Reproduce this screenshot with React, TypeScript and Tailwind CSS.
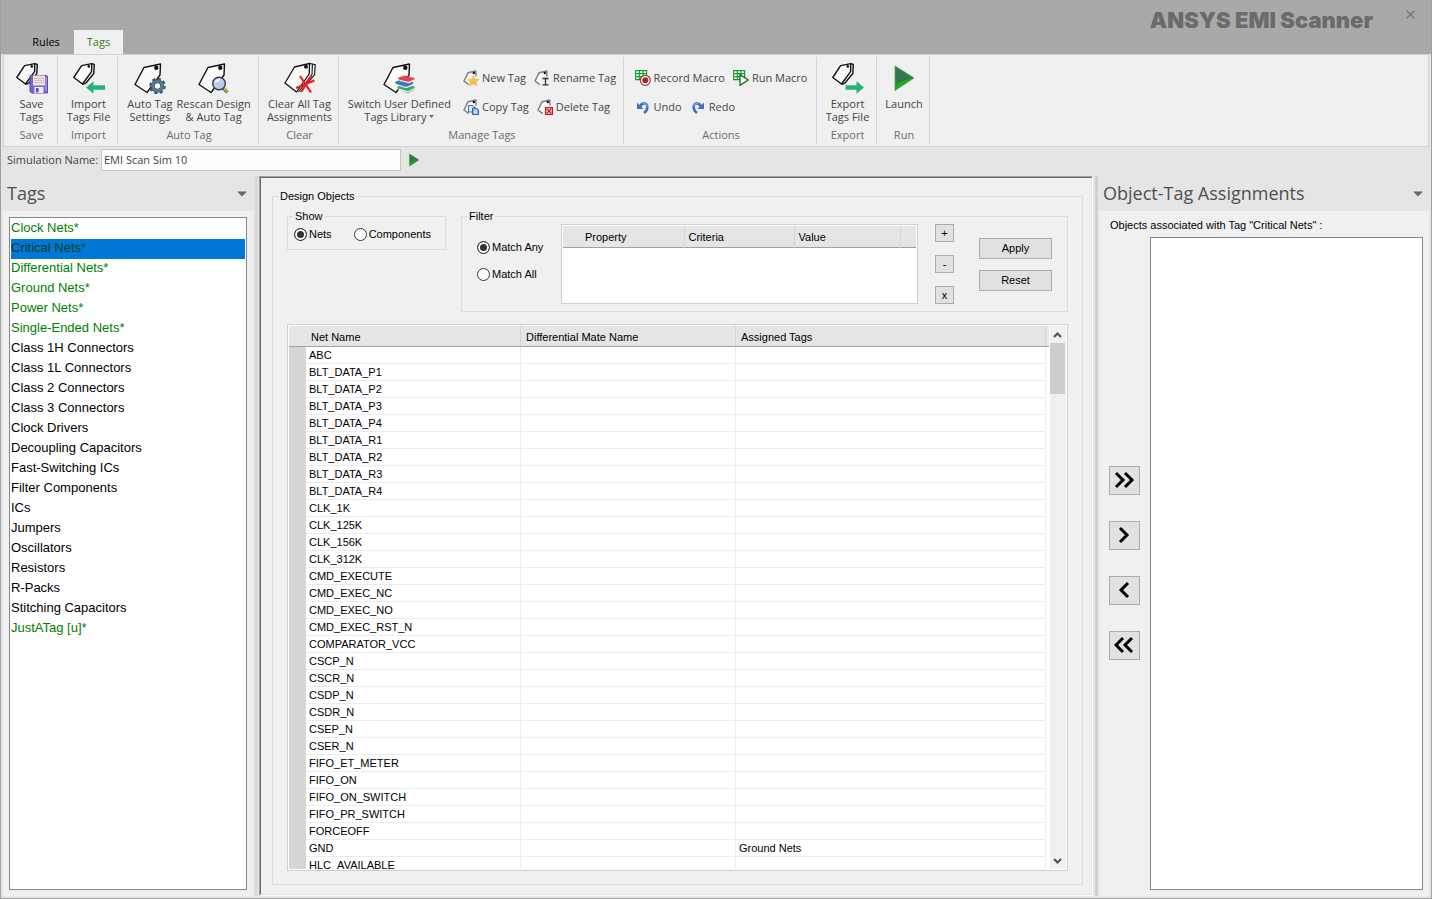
import React, { useState } from "react";

const INK = "#111111";

const TAGS: { name: string; edited?: boolean }[] = [
  { name: "Clock Nets*", edited: true },
  { name: "Critical Nets*", edited: true },
  { name: "Differential Nets*", edited: true },
  { name: "Ground Nets*", edited: true },
  { name: "Power Nets*", edited: true },
  { name: "Single-Ended Nets*", edited: true },
  { name: "Class 1H Connectors" },
  { name: "Class 1L Connectors" },
  { name: "Class 2 Connectors" },
  { name: "Class 3 Connectors" },
  { name: "Clock Drivers" },
  { name: "Decoupling Capacitors" },
  { name: "Fast-Switching ICs" },
  { name: "Filter Components" },
  { name: "ICs" },
  { name: "Jumpers" },
  { name: "Oscillators" },
  { name: "Resistors" },
  { name: "R-Packs" },
  { name: "Stitching Capacitors" },
  { name: "JustATag [u]*", edited: true },
];

const NETS: { name: string; tags?: string }[] = [
  { name: "ABC" },
  { name: "BLT_DATA_P1" },
  { name: "BLT_DATA_P2" },
  { name: "BLT_DATA_P3" },
  { name: "BLT_DATA_P4" },
  { name: "BLT_DATA_R1" },
  { name: "BLT_DATA_R2" },
  { name: "BLT_DATA_R3" },
  { name: "BLT_DATA_R4" },
  { name: "CLK_1K" },
  { name: "CLK_125K" },
  { name: "CLK_156K" },
  { name: "CLK_312K" },
  { name: "CMD_EXECUTE" },
  { name: "CMD_EXEC_NC" },
  { name: "CMD_EXEC_NO" },
  { name: "CMD_EXEC_RST_N" },
  { name: "COMPARATOR_VCC" },
  { name: "CSCP_N" },
  { name: "CSCR_N" },
  { name: "CSDP_N" },
  { name: "CSDR_N" },
  { name: "CSEP_N" },
  { name: "CSER_N" },
  { name: "FIFO_ET_METER" },
  { name: "FIFO_ON" },
  { name: "FIFO_ON_SWITCH" },
  { name: "FIFO_PR_SWITCH" },
  { name: "FORCEOFF" },
  { name: "GND", tags: "Ground Nets" },
  { name: "HLC_AVAILABLE" },
];

/* ---------- icons ---------- */

function Icon32({ children }: { children: React.ReactNode }) {
  return (
    <svg width="32" height="32" viewBox="0 0 32 32" fill="none" aria-hidden="true" className="shrink-0">
      {children}
    </svg>
  );
}

function BigTag() {
  return (
    <>
      <path d="M1 22.5 L10 5.5 L26.5 2 L26 13 L13 30.5 Z" fill="#fafafa" stroke={INK} strokeWidth="1.4" strokeLinejoin="round" />
      <circle cx="22.3" cy="5.8" r="2.2" fill={INK} />
    </>
  );
}

function SmallDoubleTag() {
  return (
    <>
      <path d="M12.5 21.5 L20.8 11.5 L21.3 2.4 L18.5 1.6" fill="#fafafa" stroke={INK} strokeWidth="1.4" strokeLinejoin="round" />
      <path d="M.8 15.5 L8.6 3.6 L18.8 1.6 L18.6 9.6 L9.5 22 Z" fill="#fafafa" stroke={INK} strokeWidth="1.4" strokeLinejoin="round" />
      <path d="M9.5 22 L12.5 21.5" stroke={INK} strokeWidth="1.4" />
      <circle cx="15.8" cy="4.4" r="1.3" fill={INK} />
    </>
  );
}

function SaveTagsIcon() {
  return (
    <Icon32>
      <SmallDoubleTag />
      <path d="M14 13.5 H30 Q31.5 13.5 31.5 15 V31 H15.5 L14 29.5 Z" fill="#7266cf" stroke="#5a4fb5" />
      <rect x="17" y="13.5" width="12" height="10" fill="#f0dfd8" />
      <path d="M18 16.5 H28 M18 18.5 H28 M18 20.5 H28" stroke="#cdb9b4" strokeWidth=".8" />
      <rect x="18.5" y="25" width="9" height="6" fill="#efeff8" />
      <rect x="20" y="26" width="2.6" height="4.4" fill="#5a4fb5" />
      <path d="M30 15 V29" stroke="#b4acec" />
    </Icon32>
  );
}

function ImportTagsIcon() {
  return (
    <Icon32>
      <SmallDoubleTag />
      <path d="M13 25.5 L20.5 19.2 V23.3 H32 V27.8 H20.5 V31.8 Z" fill="#27b378" />
    </Icon32>
  );
}

function ExportTagsIcon() {
  return (
    <Icon32>
      <SmallDoubleTag />
      <path d="M32 25.5 L24.5 19.2 V23.3 H13.5 V27.8 H24.5 V31.8 Z" fill="#27b378" />
    </Icon32>
  );
}

function AutoTagIcon() {
  return (
    <Icon32>
      <BigTag />
      <circle cx="23.5" cy="24" r="6.6" stroke="#3c5c6e" strokeWidth="3.4" strokeDasharray="2.9 2.28" />
      <circle cx="23.5" cy="24" r="4.7" stroke="#3c5c6e" strokeWidth="4" fill="#fafafa" />
      <circle cx="23.5" cy="24" r="4.7" stroke="#567d92" strokeWidth="2.6" />
    </Icon32>
  );
}

function RescanIcon() {
  return (
    <Icon32>
      <BigTag />
      <path d="M25 26 L29.4 30.4" stroke="#857526" strokeWidth="3.4" />
      <path d="M25.5 25.8 L29 29.4" stroke="#d3c156" strokeWidth="1.4" />
      <circle cx="21" cy="21.5" r="6.3" fill="#b9cdf0" stroke="#333c4d" strokeWidth="1.4" />
      <path d="M16.5 20.5 Q18 16.5 22 16.8 Q22.5 20 16.5 20.5" fill="#f3f7ff" />
    </Icon32>
  );
}

function ClearTagsIcon() {
  return (
    <Icon32>
      <path d="M16.5 30 L30.6 12.5 L31.2 2.6 L26 1.5" fill="#fafafa" stroke={INK} strokeWidth="1.1" />
      <path d="M14.5 30 L28 12.5 L28.4 2.2" fill="#fafafa" stroke={INK} strokeWidth="1.1" />
      <path d="M1 21 L10.5 5 L25.6 1.5 L25.2 12 L12.5 30 Z" fill="#fafafa" stroke={INK} strokeWidth="1.3" strokeLinejoin="round" />
      <circle cx="22" cy="4.8" r="2" fill={INK} />
      <path d="M16 14 L27 30.5 M12 26 L30.5 18.5 M27.5 13.5 L17.5 29.5" stroke="#ec1c24" strokeWidth="2.2" />
    </Icon32>
  );
}

function LibraryIcon() {
  return (
    <Icon32>
      <BigTag />
      <path d="M15 27 L25 31.5 L31.5 27.5 V24.5 L20 22.5 L14 25 Z" fill="#45a466" />
      <path d="M15.5 27.2 L25 30 L31.5 26.5" stroke="#eaf5ee" strokeWidth="1.4" />
      <path d="M12.5 21.5 L23.5 26.5 L30 22.5 V20 L17 18 L12 20 Z" fill="#2f7cc2" />
      <path d="M14.5 23 L23.5 25.6 L30 22.6" stroke="#e4f0fb" strokeWidth="1.3" />
      <path d="M15 17 L26 21.5 L31.5 18 V16 L21.5 13.5 L15.5 15.5 Z" fill="#e0464b" />
      <path d="M16.5 18.3 L26 20.6 L31.5 17.9" stroke="#fbe7e6" strokeWidth="1.2" />
    </Icon32>
  );
}

function LaunchIcon({ size }: { size: number }) {
  return (
    <svg width={size} height={size} viewBox="0 0 32 32" fill="none" aria-hidden="true" className="shrink-0">
      <path d="M7 4 L26 16 L7 28.5 Z" fill="#2f8f2f" />
      <path d="M7 4 L26 16 Q16 17 7 22 Z" fill="#34774b" />
      <path d="M7.5 27.5 Q9 19.5 25 16.2 Z" fill="#12b312" />
      <path d="M7 4 L26 16 L7 28.5 Z" stroke="#5ba05b" strokeWidth=".8" />
    </svg>
  );
}

function Icon16({ children }: { children: React.ReactNode }) {
  return (
    <svg width="16" height="16" viewBox="0 0 16 16" fill="none" aria-hidden="true" className="shrink-0">
      {children}
    </svg>
  );
}

function MiniTag() {
  return (
    <>
      <path d="M5.8 14.6 L1 11 L5 2.8 L12.8 1 L12.9 6.5" fill="#fafafa" stroke="#808080" strokeWidth="1.5" strokeLinejoin="round" />
      <circle cx="10.8" cy="3" r="1.2" fill={INK} />
    </>
  );
}

const NewTagIcon = () => (
  <Icon16>
    <MiniTag />
    <path d="M10.3 5.6 L11.8 9.2 L15.8 9.5 L12.8 12 L13.8 15.8 L10.3 13.7 L6.8 15.8 L7.8 12 L4.8 9.5 L8.8 9.2 Z" fill="#fbbf45" stroke="#e9a32a" strokeWidth=".5" />
  </Icon16>
);

const RenameTagIcon = () => (
  <Icon16>
    <MiniTag />
    <rect x="7.5" y="7" width="8" height="9" fill="#f0f0f0" />
    <path d="M8.5 8.5 H14.5 M8.5 14.8 H14.5 M11.5 8.5 V14.8" stroke="#333" strokeWidth="1.3" />
  </Icon16>
);

const CopyTagIcon = () => (
  <Icon16>
    <MiniTag />
    <path d="M5.5 6.5 H10 L11.5 8 V13 H5.5 Z" fill="#dce9fa" stroke="#3d6dba" />
    <path d="M9.5 9 H13.5 L15.5 11 V15.5 H9.5 Z" fill="#8fb2e8" stroke="#2f5fb0" />
    <path d="M11 12 H14 M11 13.8 H14" stroke="#fff" strokeWidth=".8" />
  </Icon16>
);

const DeleteTagIcon = () => (
  <Icon16>
    <MiniTag />
    <rect x="8.7" y="8.7" width="6.6" height="6.6" fill="#fff" stroke="#c8141e" strokeWidth="1.4" />
    <path d="M10 10 L14 14 M14 10 L10 14" stroke="#c8141e" strokeWidth="1.3" />
  </Icon16>
);

const MacroGrid = () => (
  <>
    <rect x=".6" y=".6" width="11" height="9" fill="#fff" />
    <path d="M.6 .6 H11.6 V9.6 H.6 Z M.6 3.6 H11.6 M.6 6.6 H11.6 M4.3 .6 V9.6 M8 .6 V9.6" stroke="#0e9a24" strokeWidth="1.1" />
  </>
);

const RecordMacroIcon = () => (
  <Icon16>
    <MacroGrid />
    <circle cx="10.3" cy="10.3" r="5" fill="#fff" stroke="#a33434" strokeWidth="1.2" />
    <circle cx="10.3" cy="10.3" r="3" fill="#a32828" />
  </Icon16>
);

const RunMacroIcon = () => (
  <Icon16>
    <MacroGrid />
    <path d="M7 4.6 L15.2 10 L7 15.4 Z" fill="#fff" stroke="#146b22" strokeWidth="1.3" />
  </Icon16>
);

const UndoShape = () => (
  <>
    <path d="M5 8 Q6 4.6 9 4.4 Q12.6 4.6 12.3 8.6 Q12 12 9 14" stroke="#3d6fcb" strokeWidth="2.6" />
    <path d="M2 3.6 V10 H8.6 Z" fill="#3d6fcb" />
    <path d="M8 4.6 Q11.8 4.3 12.3 7.6" stroke="#86abea" strokeWidth="1.1" />
  </>
);

const UndoIcon = () => (
  <Icon16>
    <UndoShape />
  </Icon16>
);

const RedoIcon = () => (
  <Icon16>
    <g transform="matrix(-1 0 0 1 16 0)">
      <UndoShape />
    </g>
  </Icon16>
);

function Caret() {
  return (
    <svg width="10" height="6" viewBox="0 0 10 6" aria-hidden="true">
      <path d="M0 .5 H10 L5 5.5 Z" fill="#6a6a6a" />
    </svg>
  );
}

/* ---------- ribbon ---------- */

function RibbonGroup({ label, className, children }: { label: string; className: string; children: React.ReactNode }) {
  return (
    <section aria-label={label} className={`flex shrink-0 flex-col border-r border-[#d5d5d5] pb-px pl-[2px] ${className}`}>
      <div className="flex flex-1 justify-center">{children}</div>
      <h2 className="h-4 text-center leading-4 text-[#6b6b6b]">{label}</h2>
    </section>
  );
}

function BigButton({ icon, lines, menu }: { icon: React.ReactNode; lines: string[]; menu?: boolean }) {
  return (
    <button type="button" className="flex flex-col items-center pt-[5px] whitespace-nowrap">
      {icon}
      <span className="mt-[3px] flex flex-col items-center leading-[13px]">
        {lines.map((line, i) => (
          <span key={line} className="flex items-center gap-[3px]">
            {line}
            {menu && i === lines.length - 1 && (
              <svg width="5" height="3" viewBox="0 0 5 3" aria-hidden="true">
                <path d="M0 0 H5 L2.5 3 Z" fill="#6a6a6a" />
              </svg>
            )}
          </span>
        ))}
      </span>
    </button>
  );
}

function SmallButton({ icon, label }: { icon: React.ReactNode; label: string }) {
  return (
    <button type="button" className="flex h-4 items-center gap-[3px] whitespace-nowrap leading-4">
      {icon}
      {label}
    </button>
  );
}

function Ribbon() {
  return (
    <div className="mx-[2px] flex h-[93px] shrink-0 overflow-hidden border border-[#d2d2d2] bg-[#f0f0f0] py-[2px]">
      <RibbonGroup label="Save" className="w-[54px]">
        <BigButton icon={<SaveTagsIcon />} lines={["Save", "Tags"]} />
      </RibbonGroup>
      <RibbonGroup label="Import" className="w-[60px]">
        <BigButton icon={<ImportTagsIcon />} lines={["Import", "Tags File"]} />
      </RibbonGroup>
      <RibbonGroup label="Auto Tag" className="w-[141px]">
        <div className="flex gap-1">
          <BigButton icon={<AutoTagIcon />} lines={["Auto Tag", "Settings"]} />
          <BigButton icon={<RescanIcon />} lines={["Rescan Design", "& Auto Tag"]} />
        </div>
      </RibbonGroup>
      <RibbonGroup label="Clear" className="w-[80px]">
        <BigButton icon={<ClearTagsIcon />} lines={["Clear All Tag", "Assignments"]} />
      </RibbonGroup>
      <RibbonGroup label="Manage Tags" className="w-[285px]">
        <div className="flex gap-3">
          <BigButton icon={<LibraryIcon />} lines={["Switch User Defined", "Tags Library"]} menu />
          <div className="flex flex-col gap-[13px] pt-[13px]">
            <div className="flex gap-2">
              <SmallButton icon={<NewTagIcon />} label="New Tag" />
              <SmallButton icon={<RenameTagIcon />} label="Rename Tag" />
            </div>
            <div className="flex gap-2">
              <SmallButton icon={<CopyTagIcon />} label="Copy Tag" />
              <SmallButton icon={<DeleteTagIcon />} label="Delete Tag" />
            </div>
          </div>
        </div>
      </RibbonGroup>
      <RibbonGroup label="Actions" className="w-[193px]">
        <div className="flex flex-col gap-[13px] pt-[13px]">
          <div className="flex gap-2">
            <SmallButton icon={<RecordMacroIcon />} label="Record Macro" />
            <SmallButton icon={<RunMacroIcon />} label="Run Macro" />
          </div>
          <div className="flex gap-2">
            <SmallButton icon={<UndoIcon />} label="Undo" />
            <SmallButton icon={<RedoIcon />} label="Redo" />
          </div>
        </div>
      </RibbonGroup>
      <RibbonGroup label="Export" className="w-[60px]">
        <BigButton icon={<ExportTagsIcon />} lines={["Export", "Tags File"]} />
      </RibbonGroup>
      <RibbonGroup label="Run" className="w-[53px]">
        <BigButton icon={<LaunchIcon size={32} />} lines={["Launch"]} />
      </RibbonGroup>
    </div>
  );
}

/* ---------- panels ---------- */

function PanelHeader({ title }: { title: string }) {
  return (
    <header className="flex h-[35px] shrink-0 items-center justify-between pr-[6px] pl-1">
      <h2 className="pb-[2px] text-[18px] leading-6 text-[#505050]">{title}</h2>
      <button type="button" aria-label={`${title} options`}>
        <Caret />
      </button>
    </header>
  );
}

function TagsPanel() {
  const [selected, setSelected] = useState("Critical Nets*");
  return (
    <aside className="flex w-[250px] shrink-0 flex-col">
      <PanelHeader title="Tags" />
      <div className="flex min-h-0 flex-1 bg-[#f0f0f0] p-[6px]">
        <ul className="flex-1 overflow-hidden border border-[#828790] bg-white p-px font-['Liberation_Sans',sans-serif] text-[13px]">
          {TAGS.map((tag) => (
            <li key={tag.name}>
              <button
                type="button"
                onClick={() => setSelected(tag.name)}
                className={`block h-5 w-full pb-[2px] text-left leading-4 ${
                  tag.name === selected
                    ? "bg-[#0078d7] text-[#003c1e]"
                    : tag.edited
                      ? "text-[#008000]"
                      : "text-black"
                }`}
              >
                {tag.name}
              </button>
            </li>
          ))}
        </ul>
      </div>
    </aside>
  );
}

function Radio({ name, label, checked }: { name: string; label: string; checked?: boolean }) {
  return (
    <label className="flex h-4 items-center gap-[2px] leading-4 whitespace-nowrap">
      <input
        type="radio"
        name={name}
        defaultChecked={checked}
        className="size-[13px] appearance-none rounded-full border border-[#333] bg-white checked:bg-[#333] checked:shadow-[inset_0_0_0_2px_#fff]"
      />
      {label}
    </label>
  );
}

function PushButton({ className, children }: { className: string; children: React.ReactNode }) {
  return (
    <button type="button" className={`flex items-center justify-center border border-[#adadad] bg-[#e1e1e1] leading-4 text-black ${className}`}>
      {children}
    </button>
  );
}

function FilterBox() {
  return (
    <fieldset className="flex flex-1 border border-[#dcdcdc] pr-[15px] pb-[7px] pl-[15px]">
      <legend className="-ml-[10px] px-[2px] leading-4">Filter</legend>
      <div className="flex flex-1">
        <div className="flex w-[84px] flex-col gap-[11px] pt-[15px]">
          <Radio name="match" label="Match Any" checked />
          <Radio name="match" label="Match All" />
        </div>
        <div className="h-20 flex-1 border border-[#d0d0d0] bg-white p-px">
          <table className="w-full table-fixed border-collapse">
            <thead>
              <tr className="h-[21px] border-b border-[#a0a0a0] bg-[#e5e5e5] text-left leading-4">
                <th className="border-r border-[#d5d5d5] pt-[2px] pl-[22px] font-normal">Property</th>
                <th className="w-[110px] border-r border-[#d5d5d5] pt-[2px] pl-1 font-normal">Criteria</th>
                <th className="w-[106px] border-r border-[#d5d5d5] pt-[2px] pl-1 font-normal">Value</th>
                <th className="w-4" aria-label="Scroll" />
              </tr>
            </thead>
          </table>
        </div>
        <div className="ml-[17px] flex flex-col gap-[13px]">
          <PushButton className="h-[18px] w-[19px]">+</PushButton>
          <PushButton className="h-[18px] w-[19px]">-</PushButton>
          <PushButton className="h-[18px] w-[19px]">x</PushButton>
        </div>
        <div className="ml-[25px] flex flex-col justify-center gap-[11px]">
          <PushButton className="h-[21px] w-[73px]">Apply</PushButton>
          <PushButton className="h-[21px] w-[73px]">Reset</PushButton>
        </div>
      </div>
    </fieldset>
  );
}

function NetTable() {
  return (
    <div className="mt-3 flex min-h-0 flex-1 overflow-hidden border border-[#d0d0d0] bg-white p-px">
      <div className="min-w-0 flex-1 overflow-hidden">
        <table className="w-full table-fixed border-separate border-spacing-0 text-left leading-4">
          <thead>
            <tr className="h-[21px] bg-[#e5e5e5]">
              <th className="w-[17px] border-b border-[#a0a0a0]" aria-label="Row" />
              <th className="w-[215px] border-r border-b border-r-[#d5d5d5] border-b-[#a0a0a0] pt-[2px] pl-[5px] font-normal">Net Name</th>
              <th className="w-[215px] border-r border-b border-r-[#d5d5d5] border-b-[#a0a0a0] pt-[2px] pl-[5px] font-normal">Differential Mate Name</th>
              <th className="border-r border-b border-r-[#d5d5d5] border-b-[#a0a0a0] pt-[2px] pl-[5px] font-normal">Assigned Tags</th>
              <th className="w-[3px] border-b border-[#a0a0a0]" aria-label="End" />
            </tr>
          </thead>
          <tbody>
            {NETS.map((net) => (
              <tr key={net.name} className="h-[17px]">
                <td className="bg-[#d6d6d6]" />
                <td className="border-r border-b border-[#ececec] pl-[3px]">{net.name}</td>
                <td className="border-r border-b border-[#ececec]" />
                <td className="border-r border-b border-[#ececec] pl-[3px]">{net.tags}</td>
                <td />
              </tr>
            ))}
          </tbody>
        </table>
      </div>
      <div className="ml-px flex w-4 flex-col bg-[#f0f0f0]">
        <button type="button" aria-label="Scroll up" className="flex h-[17px] w-[15px] items-center justify-center">
          <svg width="9" height="6" viewBox="0 0 9 6" fill="none" aria-hidden="true">
            <path d="M1 5 L4.5 1.5 L8 5" stroke="#505050" strokeWidth="2" />
          </svg>
        </button>
        <div className="h-[51px] w-[15px] bg-[#cdcdcd]" />
        <div className="flex-1" />
        <button type="button" aria-label="Scroll down" className="flex h-[17px] w-[15px] items-center justify-center">
          <svg width="9" height="6" viewBox="0 0 9 6" fill="none" aria-hidden="true">
            <path d="M1 1 L4.5 4.5 L8 1" stroke="#505050" strokeWidth="2" />
          </svg>
        </button>
      </div>
    </div>
  );
}

function DesignObjects() {
  return (
    <main className="mr-[2px] ml-px flex min-w-0 flex-1 border border-t-[#a0a0a0] border-r-white border-b-white border-l-[#a0a0a0] font-['Liberation_Sans',sans-serif] text-[11px] text-black">
      <div className="flex min-w-0 flex-1 border border-t-[#696969] border-r-[#e3e3e3] border-b-[#e3e3e3] border-l-[#696969] bg-[#f0f0f0] pt-[10px] pr-2 pb-[9px] pl-[11px]">
        <fieldset className="flex min-h-0 min-w-0 flex-1 flex-col border border-[#dcdcdc] px-[14px] pb-[13px]">
          <legend className="-ml-[9px] px-[2px] leading-4">Design Objects</legend>
          <div className="flex shrink-0 items-start gap-[15px] pt-1">
            <fieldset className="w-[159px] border border-[#dcdcdc] pt-[2px] pb-[7px] pl-[6px]">
              <legend className="-ml-px px-[2px] leading-4">Show</legend>
              <div className="flex gap-[22px]">
                <Radio name="show" label="Nets" checked />
                <Radio name="show" label="Components" />
              </div>
            </fieldset>
            <FilterBox />
          </div>
          <NetTable />
        </fieldset>
      </div>
    </main>
  );
}

const MOVES: { label: string; paths: string[] }[] = [
  { label: "Assign all", paths: ["M2 2 L9 9 L2 16", "M11 2 L18 9 L11 16"] },
  { label: "Assign selected", paths: ["M6 2 L13 9 L6 16"] },
  { label: "Remove selected", paths: ["M14 2 L7 9 L14 16"] },
  { label: "Remove all", paths: ["M9 2 L2 9 L9 16", "M18 2 L11 9 L18 16"] },
];

function AssignmentsPanel() {
  return (
    <aside className="flex w-[330px] shrink-0 flex-col">
      <PanelHeader title="Object-Tag Assignments" />
      <div className="flex min-h-0 flex-1 flex-col bg-[#f0f0f0] pt-[6px] pr-[6px] pb-[6px] pl-[10px] font-['Liberation_Sans',sans-serif] text-[11px] text-black">
        <h3 className="h-5 px-px leading-4">Objects associated with Tag "Critical Nets" :</h3>
        <div className="flex flex-1 gap-[10px]">
          <div className="flex flex-col justify-center gap-[26px] pb-[2px]">
            {MOVES.map((move) => (
              <button key={move.label} type="button" aria-label={move.label} className="flex h-[29px] w-[31px] items-center justify-center border border-[#adadad] bg-[#e1e1e1]">
                <svg width="21" height="18" viewBox="0 0 21 18" fill="none" aria-hidden="true">
                  {move.paths.map((d) => (
                    <path key={d} d={d} stroke="#000" strokeWidth="3" />
                  ))}
                </svg>
              </button>
            ))}
          </div>
          <div role="listbox" aria-label="Assigned objects" className="flex-1 border border-[#828790] bg-white" />
        </div>
      </div>
    </aside>
  );
}

export default function App() {
  return (
    <div className="flex h-screen flex-col overflow-hidden border border-t-0 border-[#a0a0a0] bg-[#e5e5e5] font-['Open_Sans','Noto_Sans',sans-serif] text-[11px] text-[#444]">
      <header className="flex h-[54px] shrink-0 justify-between bg-[#a9a9a9]">
        <nav className="flex items-end pl-[17px]">
          <button type="button" className="h-6 w-14 text-black">
            Rules
          </button>
          <button type="button" className="h-6 w-[49px] bg-[#f0f0f0] text-[#3b7a1a]">
            Tags
          </button>
        </nav>
        <div className="flex items-start pr-4">
          <h1 className="pt-2 pr-[33px] font-['Inter',sans-serif] text-[22px] leading-6 font-black text-[#6b6b6b]">ANSYS EMI Scanner</h1>
          <button type="button" aria-label="Close" className="pt-[10px]">
            <svg width="9" height="9" viewBox="0 0 9 9" fill="none" aria-hidden="true">
              <path d="M.7 .7 L8.3 8.3 M8.3 .7 L.7 8.3" stroke="#6b6b6b" strokeWidth="1.2" />
            </svg>
          </button>
        </div>
      </header>
      <Ribbon />
      <div className="flex h-[29px] shrink-0 items-start pt-[2px] pl-[6px]">
        <label htmlFor="simulation-name" className="w-[94px] leading-[22px] whitespace-nowrap">
          Simulation Name:
        </label>
        <input id="simulation-name" type="text" defaultValue="EMI Scan Sim 10" className="h-[22px] w-[300px] border border-[#c6c6c6] bg-[#fdfdfd] px-[2px] pb-[2px]" />
        <button type="button" aria-label="Run simulation" className="mt-[3px] ml-[5px]">
          <LaunchIcon size={16} />
        </button>
      </div>
      <div className="flex min-h-0 flex-1 px-[2px]">
        <TagsPanel />
        <div className="ml-[2px] w-[3px] bg-[#d9d9d9]" />
        <DesignObjects />
        <div className="mr-px w-[3px] bg-[#d0d0d0]" />
        <AssignmentsPanel />
      </div>
      <div className="h-[2px] shrink-0" />
    </div>
  );
}
